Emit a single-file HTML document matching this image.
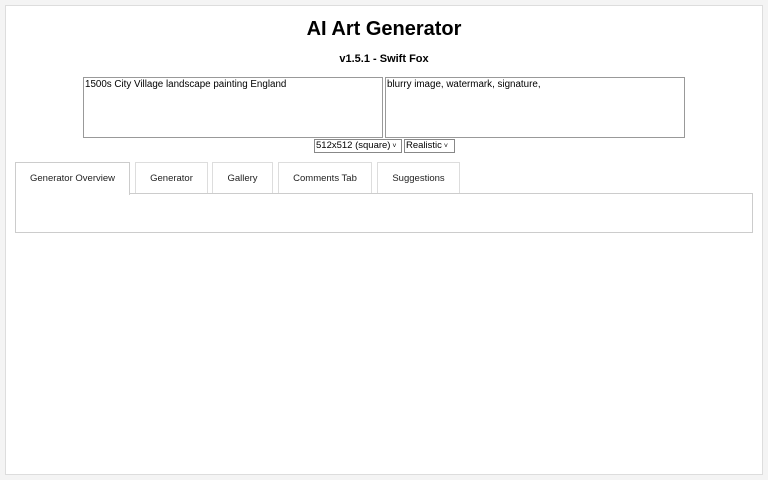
<!DOCTYPE html>
<html><head><style>
body{margin:0;background:#f4f4f4;font-family:"Liberation Sans",sans-serif;width:768px;height:480px;overflow:hidden;position:relative}
.c{position:absolute;left:5px;top:5px;width:756px;height:468px;background:#fff;border:1px solid #ddd}
.a{position:absolute;box-sizing:border-box}
h1{position:absolute;top:18px;left:0;width:768px;margin:0;text-align:center;font-size:20px;font-weight:bold;color:#000}
h3{position:absolute;top:53px;left:0;width:768px;margin:0;text-align:center;font-size:11px;font-weight:bold}
.ta{border:1px solid #999;font-size:9.8px;padding:1px 1px;color:#000;background:#fff}
.sel{border:1px solid #888;font-size:9.5px;padding:0 1px;height:14px;line-height:12px;color:#000;background:#fff;white-space:nowrap;overflow:hidden}
.tab{top:162px;height:31px;border:1px solid #ddd;border-bottom:none;font-size:9.5px;text-align:center;line-height:31px;color:#222;background:#fff}
</style></head><body>
<div class="c"></div>
<h1>AI Art Generator</h1>
<h3>v1.5.1 - Swift Fox</h3>
<div class="a ta" style="left:83px;top:77px;width:300px;height:61px">1500s City Village landscape painting England</div>
<div class="a ta" style="left:385px;top:77px;width:300px;height:61px">blurry image, watermark, signature,</div>
<div class="a sel" style="left:314px;top:139px;width:88px">512x512 (square)<span style="font-size:7px"> ˅</span></div>
<div class="a sel" style="left:404px;top:139px;width:51px">Realistic<span style="font-size:7px"> ˅</span></div>
<div class="a" style="left:15px;top:193px;width:738px;height:40px;border:1px solid #ccc"></div>
<div class="a tab" style="left:15px;width:115px;height:33px;border-color:#ccc">Generator Overview</div>
<div class="a tab" style="left:135px;width:73px">Generator</div>
<div class="a tab" style="left:212px;width:61px">Gallery</div>
<div class="a tab" style="left:278px;width:94px">Comments Tab</div>
<div class="a tab" style="left:377px;width:83px">Suggestions</div>
</body></html>
